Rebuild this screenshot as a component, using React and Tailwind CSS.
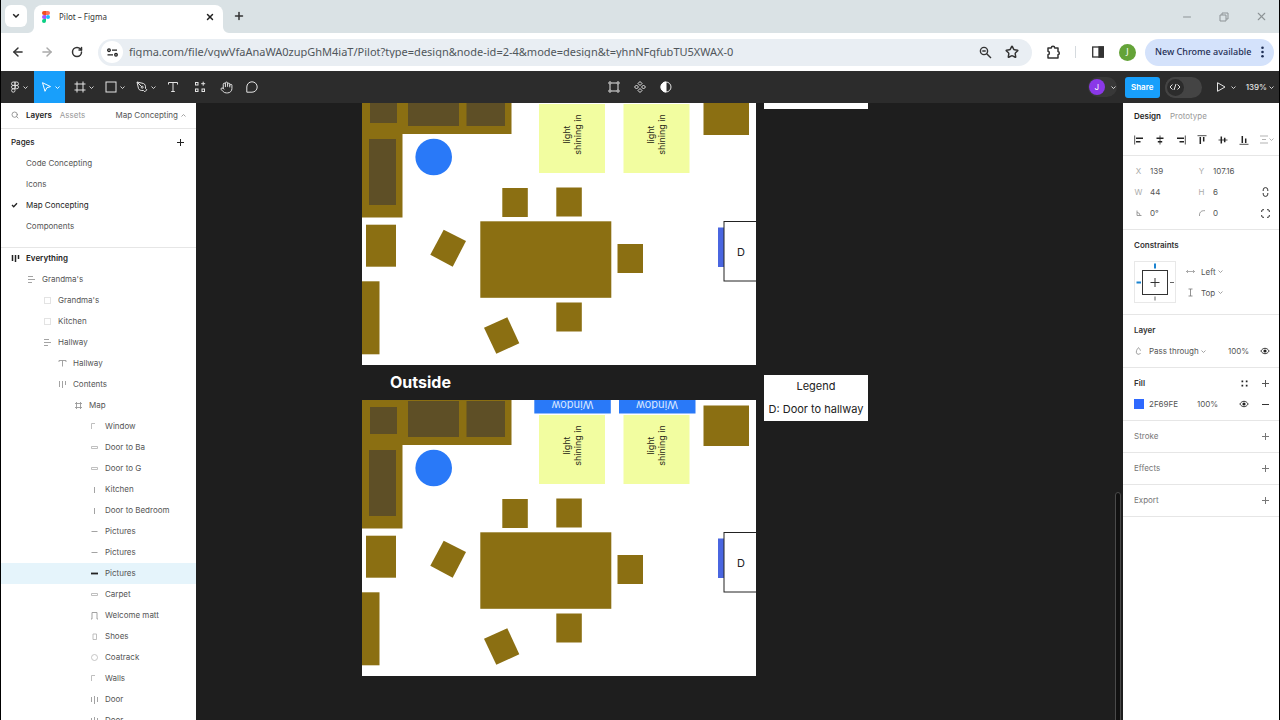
import { useState } from "react";
import { ArrowLeft, ArrowRight, RotateCw, Plus, X, Minus, Star, Search, Copy, Hand } from "lucide-react";

const layers = [
  { name: "Everything", depth: 0, icon: "cols", bold: true },
  { name: "Grandma's", depth: 1, icon: "rows" },
  { name: "Grandma's", depth: 2, icon: "group" },
  { name: "Kitchen", depth: 2, icon: "group" },
  { name: "Hallway", depth: 2, icon: "rows" },
  { name: "Hallway", depth: 3, icon: "text" },
  { name: "Contents", depth: 3, icon: "cols" },
  { name: "Map", depth: 4, icon: "frame" },
  { name: "Window", depth: 5, icon: "corner" },
  { name: "Door to Ba", depth: 5, icon: "wide" },
  { name: "Door to G", depth: 5, icon: "wide" },
  { name: "Kitchen", depth: 5, icon: "vline" },
  { name: "Door to Bedroom", depth: 5, icon: "vline" },
  { name: "Pictures", depth: 5, icon: "hline" },
  { name: "Pictures", depth: 5, icon: "hline" },
  { name: "Pictures", depth: 5, icon: "hbold" },
  { name: "Carpet", depth: 5, icon: "wide" },
  { name: "Welcome matt", depth: 5, icon: "door" },
  { name: "Shoes", depth: 5, icon: "tall" },
  { name: "Coatrack", depth: 5, icon: "circle" },
  { name: "Walls", depth: 5, icon: "corner" },
  { name: "Door", depth: 5, icon: "bars" },
  { name: "Door", depth: 5, icon: "bars" },
];

const indent = ["pl-[10px]", "pl-[26px]", "pl-[42px]", "pl-[57px]", "pl-[73px]", "pl-[89px]"];

const layerPaths = {
  cols: "M1.5 1v6M4.5 1v7M7.5 1v4",
  rows: "M1 1.5h5M1 4.5h7M1 7.5h4",
  text: "M1 3V1.5h7V3M4.5 1.5v6",
  frame: "M2.5 1v7M6.5 1v7M1 2.5h7M1 6.5h7",
  corner: "M1.5 7V1.5H5",
  wide: "M1.5 3.500h6v2h-6z",
  vline: "M4.500 2v6",
  hline: "M1.500 4.500h6",
  hbold: "M1 4.500h7",
  door: "M2 8V1.5h5V8M1 8h1M7 8h1",
  tall: "M3 2h3.500v5.500H3z",
  bars: "M1.5 2v5M4.5 1v8M7.5 2v5",
};

const faint = ["group", "corner", "circle", "tall", "wide"];

function LayerIcon({ type, dark }) {
  const color = dark ? "#222" : faint.includes(type) ? "#b8b8b8" : "#999";
  return (
    <svg className="w-[9px] h-[9px] shrink-0" viewBox="0 0 9 9" fill="none" stroke={color}>
      {type === "circle" && <circle cx="4.5" cy="4.5" r="3" strokeWidth="0.8" />}
      {type === "group" && (
        <rect x="1.500" y="1.500" width="6" height="6" strokeWidth="0.8" strokeDasharray="1 1" />
      )}
      {layerPaths[type] && (
        <path d={layerPaths[type]} strokeWidth={type === "hbold" ? 1.8 : dark ? 1.5 : 0.9} />
      )}
    </svg>
  );
}

function Chevron({ className = "", up }) {
  return (
    <svg className={`w-[5px] h-[5px] shrink-0 ${className}`} viewBox="0 0 5 5" fill="none" stroke="currentColor">
      <path d={up ? "M0.5 3.5l2-2 2 2" : "M0.5 1.5l2 2 2-2"} strokeWidth="0.9" />
    </svg>
  );
}

function PlusIcon({ className = "" }) {
  return (
    <svg className={`w-[9px] h-[9px] shrink-0 ${className}`} viewBox="0 0 9 9" fill="none" stroke="currentColor">
      <path d="M4.5 1v7M1 4.5h7" />
    </svg>
  );
}

function Eye() {
  return (
    <svg className="w-[10px] h-[8px] shrink-0" viewBox="0 0 10 8" fill="none" stroke="#222">
      <path d="M0.8 4C2 2.2 3.4 1.3 5 1.3S8 2.2 9.2 4C8 5.8 6.6 6.7 5 6.7S2 5.8 0.8 4z" strokeWidth="0.9" />
      <circle cx="5" cy="4" r="1.6" fill="#222" stroke="none" />
    </svg>
  );
}

function TabStrip() {
  return (
    <div className="h-[33px] shrink-0 bg-[#dae2e5] flex items-end">
      <button aria-label="Search tabs" className="ml-1 mb-[6px] w-[22px] h-[22px] rounded-md bg-white text-[#222] flex items-center justify-center">
        <svg className="w-[8px] h-[6px]" viewBox="0 0 8 6" fill="none" stroke="currentColor">
          <path d="M1.2 1.3L4 4l2.8-2.7" strokeWidth="1.5" />
        </svg>
      </button>
      <div className="relative ml-[7px] w-[189px] h-7 bg-white rounded-t-lg flex items-center pl-2 pr-2 pb-1">
        <svg className="absolute -left-[6px] bottom-0 w-[6px] h-[6px]" viewBox="0 0 6 6">
          <path d="M6 0v6H0a6 6 0 0 0 6-6z" fill="#fff" />
        </svg>
        <svg className="absolute -right-[6px] bottom-0 w-[6px] h-[6px]" viewBox="0 0 6 6">
          <path d="M0 0v6h6a6 6 0 0 1-6-6z" fill="#fff" />
        </svg>
        <svg className="w-[8px] h-[12px]" viewBox="0 0 8 12">
          <path d="M4 0H2a2 2 0 0 0 0 4h2z" fill="#f24e1e" />
          <path d="M4 0h2a2 2 0 0 1 0 4H4z" fill="#ff7262" />
          <path d="M4 4H2a2 2 0 0 0 0 4h2z" fill="#a259ff" />
          <circle cx="6" cy="6" r="2" fill="#1abcfe" />
          <path d="M4 8H2a2 2 0 1 0 2 2z" fill="#0acf83" />
        </svg>
        <span className="ml-[9px] flex-1 font-['Noto_Sans'] text-[8px] text-[#333]">Pilot – Figma</span>
        <button aria-label="Close tab">
          <X className="w-[10px] h-[10px] text-[#222]" strokeWidth={3.5} />
        </button>
      </div>
      <button aria-label="New tab" className="ml-[10px] mb-[11px]">
        <Plus className="w-[12px] h-[12px] text-[#333]" strokeWidth={3} />
      </button>
      <div className="ml-auto mb-[10px] mr-[11px] flex items-center gap-[26px] text-[#8d9396]">
        <button aria-label="Minimize">
          <Minus className="w-[12px] h-[12px]" strokeWidth={2} />
        </button>
        <button aria-label="Restore">
          <svg className="w-[10px] h-[10px]" viewBox="0 0 10 10" fill="none" stroke="currentColor">
            <path d="M1 3h6v6H1zM3 3V1h6v6H7" />
          </svg>
        </button>
        <button aria-label="Close window">
          <X className="w-[13px] h-[13px]" strokeWidth={2} />
        </button>
      </div>
    </div>
  );
}

function AddressBar() {
  return (
    <div className="h-[38px] shrink-0 bg-white flex items-center pl-[10px] pr-[5px] text-[#333]">
      <button aria-label="Back">
        <ArrowLeft className="w-[14px] h-[14px]" strokeWidth={2.5} />
      </button>
      <button aria-label="Forward" className="ml-[15px] text-[#aaa]">
        <ArrowRight className="w-[14px] h-[14px]" strokeWidth={2.5} />
      </button>
      <button aria-label="Reload" className="ml-[17px]">
        <RotateCw className="w-[12px] h-[12px]" strokeWidth={3} />
      </button>
      <div className="ml-[15px] flex-1 h-[27px] rounded-full bg-[#e9eef3] flex items-center pl-[3px] pr-[13px]">
        <button aria-label="Site information" className="w-[22px] h-[22px] rounded-full bg-white flex items-center justify-center">
          <svg className="w-[11px] h-[9px]" viewBox="0 0 11 9" fill="none" stroke="#222" strokeWidth="1.3">
            <circle cx="2" cy="2.2" r="1.3" />
            <circle cx="9" cy="6.8" r="1.3" />
            <path d="M5 2.2h5M0.5 6.8h5.5" />
          </svg>
        </button>
        <input
          aria-label="Address"
          className="ml-[6px] flex-1 min-w-0 bg-transparent outline-none font-['Noto_Sans'] text-[11px] text-[#50565b]"
          defaultValue="figma.com/file/vgwVfaAnaWA0zupGhM4iaT/Pilot?type=design&node-id=2-4&mode=design&t=yhnNFqfubTU5XWAX-0"
        />
        <button aria-label="Zoom">
          <svg className="w-[13px] h-[13px]" viewBox="0 0 13 13" fill="none" stroke="#333" strokeWidth="1.4">
            <circle cx="5" cy="5" r="3.6" />
            <path d="M7.7 7.7l4.3 4.3M3.3 5h3.4" />
          </svg>
        </button>
        <button aria-label="Bookmark" className="ml-[13px]">
          <Star className="w-[14px] h-[14px]" strokeWidth={2.5} />
        </button>
      </div>
      <button aria-label="Extensions" className="ml-[14px]">
        <svg className="w-[15px] h-[15px]" viewBox="0 0 15 15" fill="none" stroke="#333" strokeWidth="1.5">
          <path d="M2 3h3.3a1.700 1.700 0 0 1 3.400 0H12v3.500a1.700 1.700 0 0 1 0 3.300V13H2V9.800a1.800 1.800 0 0 0 0-3.500z" strokeLinejoin="round" />
        </svg>
      </button>
      <span className="ml-[14px] w-px h-[12px] bg-[#d5dade]" />
      <button aria-label="Side panel" className="ml-[16px]">
        <svg className="w-[12px] h-[12px]" viewBox="0 0 12 12" fill="none" stroke="#333" strokeWidth="1.3">
          <rect x="0.7" y="1" width="10.6" height="10" />
          <path d="M7 1h4.3v10H7z" fill="#333" />
        </svg>
      </button>
      <span className="ml-[15px] w-[17px] h-[17px] rounded-full bg-[#64a338] text-white font-['Noto_Sans'] text-[9px] flex items-center justify-center">
        J
      </span>
      <button className="ml-[9px] w-[129px] h-[27px] rounded-full bg-[#d4e2fb] text-[#1f2f55] font-['Noto_Sans'] text-[9px] font-medium flex items-center justify-between pl-[10px] pr-[10px] whitespace-nowrap">
        New Chrome available
        <svg className="w-[3px] h-[12px]" viewBox="0 0 3 12" fill="currentColor">
          <circle cx="1.5" cy="1.7" r="1.3" />
          <circle cx="1.5" cy="6" r="1.3" />
          <circle cx="1.5" cy="10.3" r="1.3" />
        </svg>
      </button>
    </div>
  );
}

function ToolIcon({ children }) {
  return (
    <svg className="w-[14px] h-[14px] shrink-0" viewBox="0 0 14 14" fill="none" stroke="currentColor">
      {children}
    </svg>
  );
}

function FigmaToolbar() {
  const tool = "w-[31px] h-full flex items-center justify-center gap-[2px]";
  const plain = "w-[26px] h-full flex items-center justify-center";
  return (
    <div className="h-8 shrink-0 bg-[#2c2c2c] text-[#e4e4e4] flex items-center">
      <div className="flex-1 h-full flex items-center">
        <button aria-label="Main menu" className="w-[33px] h-full flex items-center justify-center gap-px">
          <ToolIcon>
            <path
              d="M7 2H5.200a1.700 1.700 0 0 0 0 3.400H7zM7 2h1.800a1.700 1.700 0 0 1 0 3.400H7zM7 5.400H5.200a1.700 1.700 0 0 0 0 3.400H7zM7 8.800H5.200a1.700 1.700 0 1 0 1.800 1.700z"
              strokeWidth="0.9"
            />
            <circle cx="8.8" cy="7.1" r="1.7" strokeWidth="0.9" />
          </ToolIcon>
          <Chevron />
        </button>
        <button aria-label="Move" className={`${tool} bg-[#189ffb] text-white`}>
          <ToolIcon>
            <path d="M3.5 2.7l8 3.9-3.7 1.2-1.800 3.500z" strokeLinejoin="round" />
          </ToolIcon>
          <Chevron />
        </button>
        <button aria-label="Frame" className={`${tool} ml-[3px]`}>
          <ToolIcon>
            <path d="M4 1.5v11M10 1.5v11M1.5 4h11M1.5 10h11" />
          </ToolIcon>
          <Chevron />
        </button>
        <button aria-label="Rectangle" className={tool}>
          <ToolIcon>
            <rect x="2" y="2" width="10" height="10" />
          </ToolIcon>
          <Chevron />
        </button>
        <button aria-label="Pen" className={tool}>
          <ToolIcon>
            <path d="M2 2l6.500 1.500c1.500.5 2.300 2.500 2 5l1.300 1.300-2 2L8.500 10.500c-2.500.3-4.500-.5-5-2zM2 2l4.500 4.500" strokeLinejoin="round" />
            <circle cx="7.2" cy="7.2" r="1" />
          </ToolIcon>
          <Chevron />
        </button>
        <button aria-label="Text" className="w-[23px] h-full flex items-center justify-center">
          <ToolIcon>
            <path d="M2.5 4.5v-2h9v2M7 2.5v9M5.200 11.5h3.600" />
          </ToolIcon>
        </button>
        <button aria-label="Resources" className={`${plain} ml-[3px]`}>
          <ToolIcon>
            <rect x="2.5" y="2.5" width="2.5" height="2.5" />
            <rect x="2.5" y="9" width="2.5" height="2.5" />
            <rect x="9" y="9" width="2.5" height="2.5" />
            <path d="M10.200 1.700v4M8.200 3.700h4" />
          </ToolIcon>
        </button>
        <button aria-label="Hand" className={plain}>
          <Hand className="w-[13px] h-[13px]" strokeWidth={1.8} />
        </button>
        <button aria-label="Comment" className={plain}>
          <ToolIcon>
            <path d="M1.800 12.200V7a5.200 5.200 0 1 1 5.200 5.200z" strokeLinejoin="round" />
          </ToolIcon>
        </button>
      </div>
      <div className="pl-1 flex items-center gap-[12px]">
        <button aria-label="Edit object">
          <ToolIcon>
            <path d="M4.5 3h5M4.5 11h5M3 4.5v5M11 4.5v5" />
            <circle cx="3" cy="3" r="1.2" />
            <circle cx="11" cy="3" r="1.2" />
            <circle cx="3" cy="11" r="1.2" />
            <circle cx="11" cy="11" r="1.2" />
          </ToolIcon>
        </button>
        <button aria-label="Create component">
          <ToolIcon>
            <path d="M7 1.500l2 2-2 2-2-2zM7 8.500l2 2-2 2-2-2zM3.500 5l2 2-2 2-2-2zM10.500 5l2 2-2 2-2-2z" />
          </ToolIcon>
        </button>
        <button aria-label="Use as mask">
          <ToolIcon>
            <circle cx="7" cy="7" r="5" />
            <path d="M7 2a5 5 0 0 0 0 10z" fill="#fff" stroke="#fff" />
          </ToolIcon>
        </button>
      </div>
      <div className="flex-1 h-full flex items-center justify-end pr-[5px]">
        <button aria-label="Account" className="w-[29px] h-[20px] rounded-full bg-[#383838] flex items-center gap-[6px] pl-px">
          <span className="w-[16px] h-[16px] rounded-full bg-[#8a38e8] text-white text-[8px] flex items-center justify-center">J</span>
          <Chevron />
        </button>
        <button className="ml-[8px] w-[35px] h-[21px] rounded-[3px] bg-[#189ffb] text-white text-[8px] font-semibold">Share</button>
        <button aria-label="Dev mode" className="ml-[5px] w-[37px] h-[21px] rounded-full bg-[#444] flex items-center">
          <span className="w-[21px] h-[21px] rounded-full bg-[#2c2c2c] border-2 border-[#444] flex items-center justify-center">
            <svg className="w-[12px] h-[8px] shrink-0" viewBox="0 0 12 8" fill="none" stroke="#e4e4e4">
              <path d="M3.500 1.500L1 4l2.500 2.500M8.500 1.500L11 4 8.500 6.500M7 1L5 7" />
            </svg>
          </span>
        </button>
        <button aria-label="Present" className="ml-[12px] flex items-center gap-[3px]">
          <ToolIcon>
            <path d="M3.500 2.700l7.500 4.300-7.500 4.300z" strokeLinejoin="round" />
          </ToolIcon>
          <Chevron />
        </button>
        <button className="ml-[10px] flex items-center gap-[2px] text-[8px] font-medium">
          139%
          <Chevron />
        </button>
      </div>
    </div>
  );
}

function LayersPanel() {
  const [page, setPage] = useState("Map Concepting");
  const [selected, setSelected] = useState(15);
  return (
    <aside className="w-[195px] shrink-0 bg-white text-[#555] overflow-hidden flex flex-col">
      <div className="h-[26px] pb-px shrink-0 border-b border-[#e6e6e6] flex items-center pl-[10px] pr-[10px]">
        <Search className="w-[8px] h-[8px] text-[#888]" strokeWidth={2.5} />
        <button className="ml-[7px] font-semibold text-[#222]">Layers</button>
        <button className="ml-[8px] text-[#999]">Assets</button>
        <button className="ml-auto flex items-center gap-[3px]">
          Map Concepting
          <Chevron up className="text-[#999]" />
        </button>
      </div>
      <div className="pb-[10px] shrink-0 border-b border-[#e6e6e6]">
        <div className="h-6 pt-[2px] flex items-center justify-between pl-[10px] pr-[11px] text-[#222]">
          <h2 className="font-medium">Pages</h2>
          <button aria-label="Add page">
            <PlusIcon />
          </button>
        </div>
        {["Code Concepting", "Icons", "Map Concepting", "Components"].map((name) => (
          <button
            key={name}
            onClick={() => setPage(name)}
            className={`w-full h-[21px] pb-px flex items-center pl-[10px] ${name === page ? "text-[#222]" : ""}`}
          >
            <span className="w-[15px]">
              {name === page && (
                <svg className="w-[7px] h-[6px]" viewBox="0 0 7 6" fill="none" stroke="#222">
                  <path d="M1 3l1.700 1.700L6 1.200" strokeWidth="1.3" />
                </svg>
              )}
            </span>
            {name}
          </button>
        ))}
      </div>
      {layers.map((layer, i) => (
        <button
          key={i}
          onClick={() => setSelected(i)}
          className={`w-full h-[21px] pb-px shrink-0 flex items-center gap-[6px] ${indent[layer.depth]} ${
            layer.bold ? "font-semibold text-[#222]" : ""
          } ${i === selected ? "bg-[#e5f4fb]" : ""}`}
        >
          <LayerIcon type={layer.icon} dark={layer.bold || i === selected} />
          {layer.name}
        </button>
      ))}
    </aside>
  );
}

// floor plan of one room, drawn twice on the canvas
function RoomMap() {
  return (
    <svg className="w-[394px] h-[276px] bg-white" viewBox="0 0 394 276">
      <path d="M0 0h149.500v45H40.500v83.500H0z" fill="#8b6f12" />
      <g fill="#5e4f26">
        <rect x="8" y="7" width="27" height="27" />
        <rect x="46" y="1" width="51" height="36" />
        <rect x="104.5" y="1" width="38.5" height="36" />
        <rect x="7" y="50" width="27" height="66" />
      </g>
      <circle cx="71.7" cy="68" r="18.3" fill="#2979f8" />
      <g fill="#f2fda0">
        <rect x="177" y="15" width="66" height="69" />
        <rect x="261.5" y="15" width="66" height="69" />
      </g>
      <g fill="#2979f8">
        <rect x="172.3" y="0" width="76.5" height="13.5" />
        <rect x="257" y="0" width="76.5" height="13.5" />
      </g>
      <g fontSize="11" textAnchor="middle" fill="#dbe8ff">
        <text transform="translate(210.5 1) rotate(180)">Window</text>
        <text transform="translate(295 1) rotate(180)">Window</text>
      </g>
      <g fontSize="9" textAnchor="middle" fill="#2b2b1a">
        <text transform="translate(207.5 45.5) rotate(-90)">light</text>
        <text transform="translate(218.5 45.5) rotate(-90)">shining in</text>
        <text transform="translate(292 45.5) rotate(-90)">light</text>
        <text transform="translate(303 45.5) rotate(-90)">shining in</text>
      </g>
      <g fill="#8b6f12">
        <rect x="341.5" y="5.5" width="45.5" height="40.5" />
        <rect x="140.3" y="99" width="25.5" height="29" />
        <rect x="194.3" y="98.5" width="25.5" height="29" />
        <rect x="118.3" y="132.3" width="131" height="76.5" />
        <rect x="4" y="135.700" width="30" height="42" />
        <rect x="0" y="192.3" width="17.5" height="73" />
        <rect x="255.5" y="155" width="25.5" height="29" />
        <rect x="194.3" y="213.5" width="25.5" height="29" />
        <path d="M81.700 140.700L104 152l-13.300 25.700-22.400-12z" />
        <path d="M145.300 228.300l12 26-23 10.400-12.300-26z" />
      </g>
      <rect x="356" y="138.5" width="6" height="39.5" fill="#4a66e0" />
      <rect x="362" y="132.5" width="40" height="59.5" fill="#fff" stroke="#222" />
      <text x="379" y="167" fontSize="11" textAnchor="middle" fill="#222">D</text>
    </svg>
  );
}

function Legend() {
  return (
    <div className="w-[104px] bg-white text-[11px] leading-[23px] text-center text-[#222] whitespace-nowrap">
      <p>Legend</p>
      <p>D: Door to hallway</p>
    </div>
  );
}

function Canvas() {
  return (
    <main className="relative flex-1 min-w-0 bg-[#1e1e1e] overflow-hidden">
      <div className="absolute left-[166px] -top-[14px]">
        <RoomMap />
      </div>
      <div className="absolute left-[568px] -top-[40px]">
        <Legend />
      </div>
      <h1 className="absolute left-[194px] top-[267px] text-[16px] leading-[24px] font-bold text-white">Outside</h1>
      <div className="absolute left-[166px] top-[297px]">
        <RoomMap />
      </div>
      <div className="absolute left-[568px] top-[272px]">
        <Legend />
      </div>
      <div className="absolute right-[2px] top-[389px] -bottom-2 w-[6px] rounded-full border border-[#4a4a4a] bg-[#111]" />
    </main>
  );
}

function Field({ label, icon, value }) {
  return (
    <label className="flex items-center gap-[7px] min-w-0">
      <span className="w-[9px] flex justify-center text-[#aaa]">{icon || label}</span>
      <input aria-label={label} defaultValue={value} className="w-[36px] bg-transparent outline-none" />
    </label>
  );
}

function AlignIcon({ d, bold }) {
  return (
    <svg className="w-[10px] h-[10px]" viewBox="0 0 10 10" fill="none" stroke="#222">
      <path d={d} strokeWidth="0.8" />
      <path d={bold} strokeWidth="1.5" />
    </svg>
  );
}

const aligns = [
  ["Align left", "M0.7 0.5v9", "M2 3.3h7M2 6.7h4.5"],
  ["Align horizontal centers", "M5 0.5v9", "M1.5 3.3h7M2.8 6.7h4.4"],
  ["Align right", "M9.3 0.5v9", "M1 3.3h7M3.5 6.7H8"],
  ["Align top", "M0.5 0.7h9", "M3.3 2v7M6.7 2v4.5"],
  ["Align vertical centers", "M0.5 5h9", "M3.3 1.5v7M6.7 2.8v4.4"],
  ["Align bottom", "M0.5 9.3h9", "M3.3 1v7M6.7 3.5V8"],
];

function Section({ title, muted, actions, children }) {
  return (
    <section className="pt-[5px] pb-[5px] border-b border-[#e6e6e6] pl-[11px] pr-[9px]">
      <div className="h-[21px] pb-px flex items-center justify-between">
        <h2 className={muted ? "text-[#777]" : "font-semibold text-[#333]"}>{title}</h2>
        <div className="flex items-center gap-[12px]">{actions}</div>
      </div>
      {children}
    </section>
  );
}

function DesignPanel() {
  return (
    <aside className="w-[156px] shrink-0 bg-white text-[#555] overflow-hidden">
      <div className="h-[26px] pb-px flex items-center pl-[11px] gap-[9px]">
        <button className="font-semibold text-[#222]">Design</button>
        <button className="text-[#999]">Prototype</button>
      </div>
      <div className="pb-[5px] border-b border-[#e6e6e6]">
        <div className="h-[21px] flex items-center gap-[11px] pl-[11px]">
          {aligns.map(([label, d, bold]) => (
            <button key={label} aria-label={label}>
              <AlignIcon d={d} bold={bold} />
            </button>
          ))}
          <button aria-label="Distribute" className="flex items-center gap-px text-[#aaa]">
            <svg className="w-[8px] h-[9px]" viewBox="0 0 8 9" fill="none" stroke="#aaa">
              <path d="M0 1h8M2 4.5h4M0 8h8" strokeWidth="0.9" />
            </svg>
            <Chevron />
          </button>
        </div>
      </div>
      <div className="py-[5px] border-b border-[#e6e6e6] pl-[11px] pr-[9px]">
        <div className="h-[21px] pb-px flex items-center gap-[11px]">
          <Field label="X" value="139" />
          <Field label="Y" value="107.16" />
        </div>
        <div className="h-[21px] pb-px flex items-center gap-[11px]">
          <Field label="W" value="44" />
          <Field label="H" value="6" />
          <button aria-label="Constrain proportions" className="ml-auto">
            <svg className="w-[9px] h-[10px]" viewBox="0 0 9 10" fill="none" stroke="#333">
              <path d="M2.200 4V2.900a2.300 2.300 0 0 1 4.600 0V4M2.200 6v1.100a2.300 2.300 0 0 0 4.600 0V6" />
            </svg>
          </button>
        </div>
        <div className="h-[21px] pb-px flex items-center gap-[11px]">
          <Field
            label="Rotation"
            value="0°"
            icon={
              <svg className="w-[6px] h-[6px]" viewBox="0 0 6 6" fill="none" stroke="#888">
                <path d="M1 0.500v5h4.500M1 2.500a3 3 0 0 1 3 3" strokeWidth="0.8" />
              </svg>
            }
          />
          <Field
            label="Corner radius"
            value="0"
            icon={
              <svg className="w-[6px] h-[6px]" viewBox="0 0 6 6" fill="none" stroke="#888">
                <path d="M0.500 6V5A4 4 0 0 1 4.500 0.700H6" strokeWidth="0.8" />
              </svg>
            }
          />
          <button aria-label="Independent corners" className="ml-auto">
            <svg className="w-[9px] h-[9px]" viewBox="0 0 9 9" fill="none" stroke="#333">
              <path d="M0.700 3V2A1.300 1.300 0 0 1 2 0.700h1M6 0.700h1A1.300 1.300 0 0 1 8.300 2v1M8.300 6v1A1.300 1.300 0 0 1 7 8.300H6M3 8.300H2A1.300 1.300 0 0 1 0.700 7V6" />
            </svg>
          </button>
        </div>
      </div>
      <Section title="Constraints">
        <div className="pt-[5px] pb-[6px] flex items-center gap-[10px]">
          <svg className="w-[42px] h-[42px] shrink-0" viewBox="0 0 42 42" fill="none" stroke="#333">
            <rect x="0.5" y="0.5" width="41" height="41" stroke="#e8e8e8" />
            <rect x="8.5" y="9.5" width="25" height="24" />
            <path d="M16.500 21.500h9M21 17v9" />
            <path d="M36 21.500h4M21 35.500v4" stroke="#666" />
            <path d="M2.500 21.500h4.500M21 2.500v5" stroke="#1b83d0" strokeWidth="2" />
          </svg>
          <div>
            <label className="h-[21px] flex items-center">
              <svg className="w-[9px] h-[9px]" viewBox="0 0 9 9" fill="none" stroke="#888">
                <path d="M0.500 4.500h8M2 3L0.500 4.500 2 6M7 3l1.500 1.500L7 6" strokeWidth="0.7" />
              </svg>
              <select aria-label="Horizontal constraint" className="ml-[6px] w-[17px] appearance-none bg-transparent">
                <option>Left</option>
              </select>
              <Chevron className="text-[#999]" />
            </label>
            <label className="h-[21px] flex items-center">
              <svg className="w-[9px] h-[9px]" viewBox="0 0 9 9" fill="none" stroke="#777">
                <path d="M4.500 1v7M2.500 1h4M2.500 8h4" strokeWidth="0.8" />
              </svg>
              <select aria-label="Vertical constraint" className="ml-[6px] w-[17px] appearance-none bg-transparent">
                <option>Top</option>
              </select>
              <Chevron className="text-[#999]" />
            </label>
          </div>
        </div>
      </Section>
      <Section title="Layer">
        <div className="h-[21px] pb-px flex items-center">
          <svg className="w-[9px] h-[9px]" viewBox="0 0 9 9" fill="none" stroke="#888">
            <path d="M6.500 3.700C6.200 2.500 5 1 4.500 0.700 4 1 2.300 3 2.300 5.200a2.200 2.200 0 0 0 4.200.8" strokeWidth="0.8" />
          </svg>
          <select aria-label="Blend mode" className="ml-[6px] w-[52px] appearance-none bg-transparent">
            <option>Pass through</option>
          </select>
          <Chevron className="text-[#999]" />
          <input aria-label="Layer opacity" defaultValue="100%" className="ml-auto mr-[11px] w-[21px] bg-transparent outline-none" />
          <button aria-label="Toggle layer visibility">
            <Eye />
          </button>
        </div>
      </Section>
      <Section
        title="Fill"
        actions={
          <>
            <button aria-label="Styles">
              <svg className="w-[9px] h-[9px]" viewBox="0 0 9 9" fill="#222">
                <path d="M1.500 1.500h1.700v1.700H1.500zM5.800 1.500h1.700v1.700H5.800zM1.500 5.800h1.700v1.700H1.500zM5.800 5.800h1.700v1.700H5.800z" />
              </svg>
            </button>
            <button aria-label="Add fill">
              <PlusIcon />
            </button>
          </>
        }
      >
        <div className="h-[21px] pb-px flex items-center">
          <button aria-label="Fill color" className="w-[10px] h-[10px] bg-[#2f69fe]" />
          <input aria-label="Fill hex" defaultValue="2F69FE" className="ml-[5px] w-[32px] bg-transparent outline-none" />
          <input aria-label="Fill opacity" defaultValue="100%" className="ml-[16px] w-[21px] bg-transparent outline-none" />
          <div className="ml-auto flex items-center gap-[12px]">
            <button aria-label="Toggle fill visibility">
              <Eye />
            </button>
            <button aria-label="Remove fill">
              <svg className="w-[9px] h-[9px]" viewBox="0 0 9 9" fill="none" stroke="#333">
                <path d="M1 4.500h7" />
              </svg>
            </button>
          </div>
        </div>
      </Section>
      {["Stroke", "Effects", "Export"].map((title) => (
        <Section
          key={title}
          title={title}
          muted
          actions={
            <button aria-label={`Add ${title}`}>
              <PlusIcon className="text-[#777]" />
            </button>
          }
        />
      ))}
    </aside>
  );
}

export default function App() {
  return (
    <div className="h-screen bg-black px-px flex flex-col overflow-hidden font-['Inter',sans-serif] text-[8px] leading-[12px]">
      <TabStrip />
      <AddressBar />
      <FigmaToolbar />
      <div className="flex-1 min-h-0 flex">
        <LayersPanel />
        <Canvas />
        <DesignPanel />
      </div>
    </div>
  );
}
